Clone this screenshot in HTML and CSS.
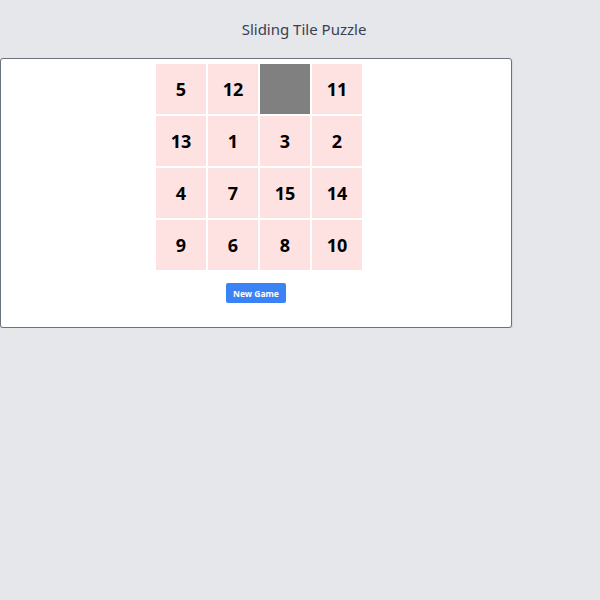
FILE: index.html
```html
<!DOCTYPE html>
<html>
  <head>
    <title>Sliding Tile Puzzle</title>
    <link rel="stylesheet" href="styles.css">
  </head>
  <body>
    <h1 class="title">Sliding Tile Puzzle</h1>
    <div class="card">
      <div class="board-wrap">
        <div class="board">
          <div class="tile">5</div>
          <div class="tile">12</div>
          <div class="tile empty"></div>
          <div class="tile">11</div>
          <div class="tile">13</div>
          <div class="tile">1</div>
          <div class="tile">3</div>
          <div class="tile">2</div>
          <div class="tile">4</div>
          <div class="tile">7</div>
          <div class="tile">15</div>
          <div class="tile">14</div>
          <div class="tile">9</div>
          <div class="tile">6</div>
          <div class="tile">8</div>
          <div class="tile">10</div>
        </div>
      </div>
      <div class="actions">
        <button type="button" class="new-game">New Game</button>
      </div>
    </div>
  </body>
</html>
```

FILE: styles.css
```css
* {
  box-sizing: border-box;
}

body {
  margin: 0;
  padding: 0;
  background-color: #e5e7eb;
  font-family: "Noto Sans", sans-serif;
}

.title {
  margin: 0;
  padding: 19px 0 0 8px;
  height: 58px;
  text-align: center;
  font-size: 15px;
  line-height: 20px;
  font-weight: normal;
  color: #374151;
}

.card {
  width: 512px;
  height: 270px;
  background-color: #fff;
  border: 1px solid #6b7280;
  border-radius: 3px;
  box-shadow: 0 1px 2px rgba(0, 0, 0, 0.2);
  padding-top: 5px;
}

.board-wrap {
  display: flex;
  justify-content: center;
  padding-left: 6px;
}

.board {
  display: grid;
  grid-template-columns: repeat(4, 50px);
  grid-auto-rows: 50px;
  gap: 2px;
}

.tile {
  display: flex;
  align-items: center;
  justify-content: center;
  background-color: #fee2e2;
  font-size: 18px;
  font-weight: bold;
  color: #000;
}

.tile.empty {
  background-color: #808080;
}

.actions {
  display: flex;
  justify-content: center;
  margin-top: 13px;
}

.new-game {
  width: 60px;
  height: 20px;
  padding: 0;
  border: none;
  border-radius: 2px;
  background-color: #3b82f6;
  color: #fff;
  font-family: "Noto Sans", sans-serif;
  font-size: 8.5px;
  font-weight: bold;
  cursor: pointer;
}
```
